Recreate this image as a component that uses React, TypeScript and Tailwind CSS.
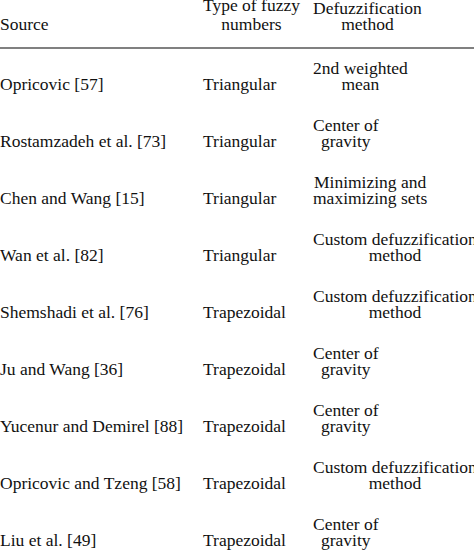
import React from "react";

type Row = { src: string; type: string; method: string[] };

const rows: Row[] = [
  { src: "Opricovic [57]", type: "Triangular", method: ["2nd weighted", "mean"] },
  { src: "Rostamzadeh et al. [73]", type: "Triangular", method: ["Center of", "gravity"] },
  { src: "Chen and Wang [15]", type: "Triangular", method: ["Minimizing and", "maximizing sets"] },
  { src: "Wan et al. [82]", type: "Triangular", method: ["Custom defuzzification", "method"] },
  { src: "Shemshadi et al. [76]", type: "Trapezoidal", method: ["Custom defuzzification", "method"] },
  { src: "Ju and Wang [36]", type: "Trapezoidal", method: ["Center of", "gravity"] },
  { src: "Yucenur and Demirel [88]", type: "Trapezoidal", method: ["Center of", "gravity"] },
  { src: "Opricovic and Tzeng [58]", type: "Trapezoidal", method: ["Custom defuzzification", "method"] },
  { src: "Liu et al. [49]", type: "Trapezoidal", method: ["Center of", "gravity"] },
];

function Stack({ lines }: { lines: string[] }) {
  return (
    <div className="inline-flex flex-col items-center whitespace-nowrap">
      {lines.map((l) => (
        <span key={l}>{l}</span>
      ))}
    </div>
  );
}

export default function App() {
  return (
    <div
      className="w-[474px] h-[555px] overflow-hidden bg-white text-[#111111] text-[17.5px] leading-[16px]"
      style={{ fontFamily: '"Liberation Serif", "Times New Roman", serif' }}
    >
      <div className="h-[49px] flex items-end pb-[15px] border-b-2 border-[#808080]">
        <div className="w-[203px] shrink-0 whitespace-nowrap">Source</div>
        <div className="w-[110px] shrink-0">
          <div className="inline-flex flex-col items-center whitespace-nowrap">
            <span className="leading-[15px] mb-[3px]">Type of fuzzy</span>
            <span>numbers</span>
          </div>
        </div>
        <div className="shrink-0">
          <Stack lines={["Defuzzification", "method"]} />
        </div>
      </div>
      <div className="flex flex-col">
        {rows.map((r, i) => (
          <div
            key={r.src}
            className={i === 0 ? "h-[43px] flex items-end" : "h-[57px] flex items-end"}
          >
            <div className="w-[203px] shrink-0 whitespace-nowrap">{r.src}</div>
            <div className="w-[110px] shrink-0 whitespace-nowrap">{r.type}</div>
            <div className="shrink-0">
              <Stack lines={r.method} />
            </div>
          </div>
        ))}
      </div>
    </div>
  );
}
